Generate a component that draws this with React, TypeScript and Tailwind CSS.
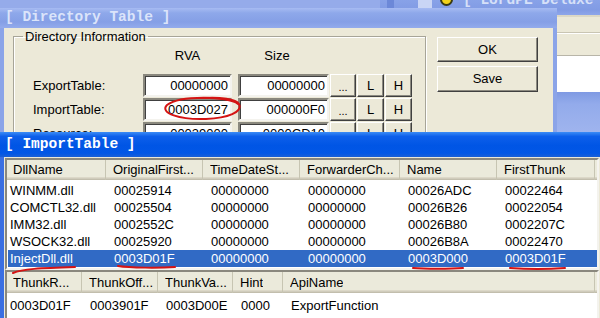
import type { ReactNode } from "react";

const dirRows = [
  { label: "ExportTable:", rva: "00000000", size: "00000000" },
  { label: "ImportTable:", rva: "0003D027", size: "000000F0" },
  { label: "Resource:", rva: "00039000", size: "0000CD10" },
];

const importCols = [
  { title: "DllName", w: "w-[99px]", pad: "pl-[6px]" },
  { title: "OriginalFirst...", w: "w-[97px]", pad: "pl-[7px]" },
  { title: "TimeDateSt...", w: "w-[97px]", pad: "pl-[7px]" },
  { title: "ForwarderCh...", w: "w-[100px]", pad: "pl-[7px]" },
  { title: "Name", w: "w-[97px]", pad: "pl-[7px]" },
  { title: "FirstThunk", w: "w-[98px]", pad: "pl-[7px]" },
];

const importRows = [
  ["WINMM.dll", "00025914", "00000000", "00000000", "00026ADC", "00022464"],
  ["COMCTL32.dll", "00025504", "00000000", "00000000", "00026B26", "00022054"],
  ["IMM32.dll", "0002552C", "00000000", "00000000", "00026B80", "0002207C"],
  ["WSOCK32.dll", "00025920", "00000000", "00000000", "00026B8A", "00022470"],
  ["InjectDll.dll", "0003D01F", "00000000", "00000000", "0003D000", "0003D01F"],
];

const thunkCols = [
  { title: "ThunkR...", w: "w-[75px]", pad: "pl-[6px]" },
  { title: "ThunkOff...", w: "w-[76px]", pad: "pl-[7px]" },
  { title: "ThunkVa...", w: "w-[75px]", pad: "pl-[7px]" },
  { title: "Hint", w: "w-[50px]", pad: "pl-[7px]" },
  { title: "ApiName", w: "w-[312px]", pad: "pl-[7px]" },
];

const thunkRow = ["0003D01F", "0003901F", "0003D00E", "0000", "ExportFunction"];

const headerShade = "bg-[#ebeadb] shadow-[inset_0_-1px_#c2bead,inset_0_-2px_#d0ccbc,inset_0_-3px_#dcd8c8]";
const sunken = "border-2 border-t-[#8a887e] border-l-[#8a887e] border-r-[#f4f3ee] border-b-[#f4f3ee]";

function RaisedButton({ children, className }: { children: ReactNode; className: string }) {
  return (
    <div
      className={`flex items-center justify-center bg-[#ece9d8] border border-t-white border-l-white border-r-[#404040] border-b-[#404040] shadow-[inset_-1px_-1px_#8c8a80] ${className}`}
    >
      {children}
    </div>
  );
}

function SunkenField({ value, className }: { value: string; className: string }) {
  return (
    <div className={`flex items-center justify-end pr-[2px] bg-white ${sunken} shadow-[inset_1px_1px_#404040] ${className}`}>
      {value}
    </div>
  );
}

function HeaderCell({ title, w, pad }: { title: string; w: string; pad: string }) {
  return (
    <div className={`${w} ${pad} shrink-0 h-full flex items-center border-r border-[#c7c5b2] ${headerShade}`}>
      <span className="truncate">{title}</span>
    </div>
  );
}

export default function App() {
  return (
    <div className="relative w-[600px] h-[318px] overflow-hidden bg-[#95abea] font-['Liberation_Sans',Arial,sans-serif] text-[13px] text-black">
      {/* window behind, top right */}
      <div className="absolute left-[380px] top-[-10px] w-[260px] h-[150px] flex flex-col">
        <div className="h-[25px] flex items-center bg-[linear-gradient(to_bottom,#9fb5f0_0%,#88a2e8_40%,#819be4_80%,#8ea6ea_100%)]">
          <div className="w-[7px] h-full bg-[#6c88d8] ml-[7px]" />
          <div className="w-[14px] h-[18px] bg-[#c9d5f5] ml-[24px] self-end" />
          <div className="w-[13px] h-[13px] rounded-full bg-[#f2d21a] border-2 border-[#3a3a10] ml-[8px] mt-[-6px]" />
          <span className="ml-[10px] mt-[-6px] font-['Liberation_Mono',monospace] font-bold text-[14.5px] leading-[16px] text-[#d6e0f8] whitespace-nowrap">
            [ LordPE Deluxe ]
          </span>
        </div>
        <div className="h-[17px] bg-[#ece9d8] border-t-2 border-[#dcd8c6]" />
        <div className="h-[23px] bg-[#ece9d8] border-t border-[#c9c5b3] shadow-[inset_0_1px_white]" />
        <div className="h-[37px] bg-white border-t border-[#b8b5a8]" />
        <div className="h-[40px] bg-[linear-gradient(to_bottom,#7f9ae3_0%,#93abeb_30%,#9fb4ee_100%)]" />
      </div>

      {/* Directory Table dialog (inactive), lower part hidden by the ImportTable dialog */}
      <div className="absolute left-0 top-[8px] w-[557px] h-[124px] overflow-hidden flex flex-col">
        <div className="h-[20px] shrink-0 flex items-center pl-[5px] bg-[linear-gradient(to_bottom,#a7bbf2_0%,#8ea8ea_25%,#859fe6_70%,#93abec_100%)]">
          <span className="font-['Liberation_Mono',monospace] font-bold text-[14.5px] text-[#dbe4fa] whitespace-nowrap">
            [ Directory Table ]
          </span>
        </div>
        <div className="flex-1 flex border-x-4 border-[#8ba4e8] bg-[#ece9d8]">
          <fieldset className="ml-[9px] mt-[1px] w-[413px] h-[200px] shrink-0 border border-[#a7a598] shadow-[1px_1px_white,inset_1px_1px_white]">
            <legend className="ml-[9px] px-[2px] leading-[15px]">Directory Information</legend>
            <div className="flex h-[24px] items-center">
              <div className="w-[129px]" />
              <div className="w-[89px] text-center">RVA</div>
              <div className="ml-[6px] w-[78px] text-center">Size</div>
            </div>
            <div className="mt-[6px] flex flex-col gap-[1px]">
              {dirRows.map((r) => (
                <div key={r.label} className="flex h-[23px] items-center">
                  <div className="w-[129px] pl-[19px]">{r.label}</div>
                  <SunkenField value={r.rva} className="w-[89px] h-[23px]" />
                  <SunkenField value={r.size} className="ml-[6px] w-[91px] h-[23px]" />
                  <RaisedButton className="ml-[1px] w-[26px] h-[23px] text-[11px] pt-[4px]">...</RaisedButton>
                  <RaisedButton className="ml-[1px] w-[27px] h-[23px]">L</RaisedButton>
                  <RaisedButton className="ml-[1px] w-[27px] h-[23px]">H</RaisedButton>
                </div>
              ))}
            </div>
          </fieldset>
          <div className="ml-[11px] mt-[9px] flex flex-col gap-[4px]">
            <RaisedButton className="w-[101px] h-[25px]">OK</RaisedButton>
            <RaisedButton className="w-[101px] h-[26px]">Save</RaisedButton>
          </div>
        </div>
      </div>

      {/* ImportTable dialog (active) */}
      <div className="absolute left-0 top-[132px] w-[620px] h-[200px] flex flex-col">
        <div className="h-[25px] shrink-0 flex items-center pl-[5px] bg-[linear-gradient(to_bottom,#3b8cf6_0%,#0d5fea_18%,#0055e5_55%,#0257e6_85%,#1a5fd6_100%)]">
          <span className="font-['Liberation_Mono',monospace] font-bold text-[14.5px] text-white whitespace-nowrap">
            [ ImportTable ]
          </span>
        </div>
        <div className="flex-1 border-l-4 border-[#3a6fe2] bg-[#ece9d8] pt-[1px]">
          {/* import list */}
          <div className={`ml-[1px] w-[594px] ${sunken} bg-white`}>
            <div className="flex h-[20px] overflow-hidden">
              {importCols.map((c) => (
                <HeaderCell key={c.title} {...c} />
              ))}
              <div className={`flex-1 ${headerShade}`} />
            </div>
            <div className="pt-[2px] pb-[1px]">
              {importRows.map((row, i) => {
                const sel = i === importRows.length - 1;
                return (
                  <div key={row[0]} className={`flex h-[17px] items-center ml-[1px] ${sel ? "bg-[#316ac5] text-white" : ""}`}>
                    {row.map((cell, j) => (
                      <div key={j} className={`${importCols[j].w} ${j === 0 ? "pl-[2px]" : "pl-[7px]"} shrink-0`}>
                        {cell}
                      </div>
                    ))}
                  </div>
                );
              })}
            </div>
          </div>
          {/* thunk list */}
          <div className={`ml-[1px] w-[594px] h-[80px] ${sunken} bg-white`}>
            <div className="flex h-[21px] overflow-hidden">
              {thunkCols.map((c) => (
                <HeaderCell key={c.title} {...c} />
              ))}
              <div className={`flex-1 ${headerShade}`} />
            </div>
            <div className="pt-[4px] flex h-[21px] items-center">
              {thunkRow.map((cell, j) => (
                <div key={j} className={`${thunkCols[j].w} ${j === 0 ? "pl-[3px]" : "pl-[8px]"} shrink-0`}>
                  {cell}
                </div>
              ))}
            </div>
          </div>
        </div>
      </div>

      {/* red pen marks */}
      <svg className="absolute left-0 top-0 pointer-events-none" width="600" height="318" viewBox="0 0 600 318">
        <g fill="none" stroke="#d41414" strokeWidth="2" strokeLinecap="round">
          <path d="M238 104 C228 96 180 95 167 105 C159 113 180 120 206 119 C228 118 243 112 239 104 C236 99 220 97 204 98" />
          <path d="M13 273 C22 269 40 268 75 267" />
          <path d="M118 266 C130 268 160 268 175 267" />
          <path d="M413 268 C425 269 450 269 463 268" />
          <path d="M510 268 C525 269 550 269 565 268" />
        </g>
      </svg>
    </div>
  );
}
